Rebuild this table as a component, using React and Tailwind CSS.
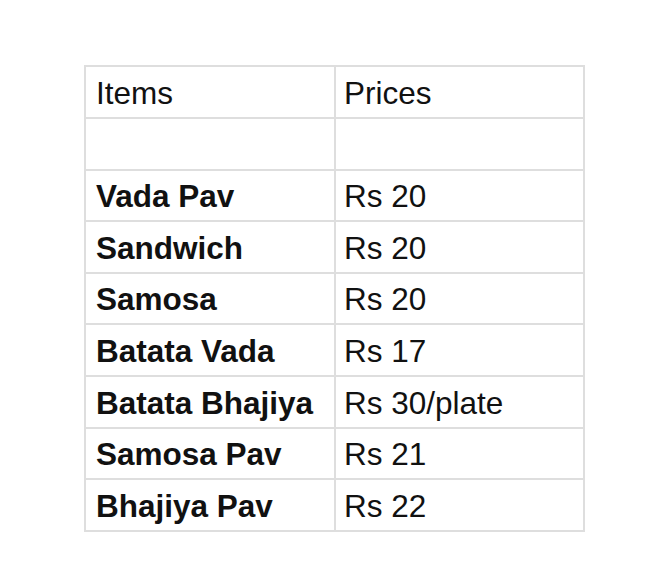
import React from 'react';

const rows = [
  { item: '', price: '' },
  { item: 'Vada Pav', price: 'Rs 20' },
  { item: 'Sandwich', price: 'Rs 20' },
  { item: 'Samosa', price: 'Rs 20' },
  { item: 'Batata Vada', price: 'Rs 17' },
  { item: 'Batata Bhajiya', price: 'Rs 30/plate' },
  { item: 'Samosa Pav', price: 'Rs 21' },
  { item: 'Bhajiya Pav', price: 'Rs 22' },
];

const App = () => {
  return (
    <div className="w-[650px] h-[588px] bg-white pt-[65px] pl-[84px]" style={{ fontFamily: '"Liberation Sans", Arial, sans-serif' }}>
      <table className="border-collapse w-[501px] text-[#111]">
        <tbody>
          <tr className="h-[52px]">
            <td className="w-[250px] border-2 border-[#dedede] pl-[10px] pt-[3px] text-[31.5px] leading-none">Items</td>
            <td className="border-2 border-[#dedede] pl-[8px] pt-[3px] text-[31.5px] leading-none">Prices</td>
          </tr>
          {rows.map((r, i) => (
            <tr key={i} className="h-[51.6px]">
              <td className="border-2 border-[#dedede] pl-[10px] pt-[3px] text-[31.5px] font-bold leading-none">{r.item}</td>
              <td className="border-2 border-[#dedede] pl-[8px] pt-[3px] text-[31.5px] leading-none">{r.price}</td>
            </tr>
          ))}
        </tbody>
      </table>
    </div>
  );
};

export default App;
